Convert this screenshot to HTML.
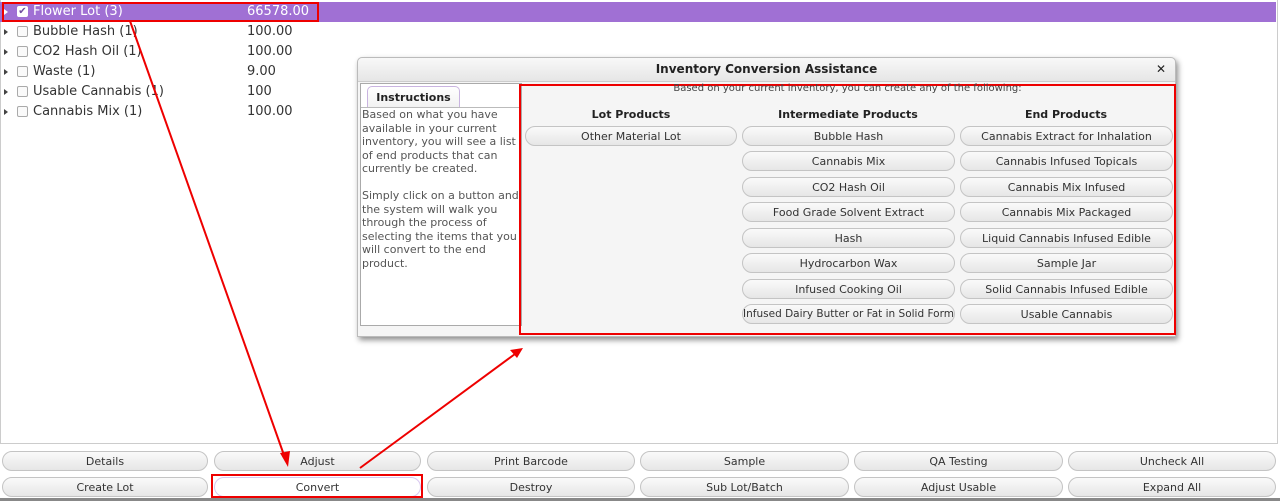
<!DOCTYPE html>
<html><head><meta charset="utf-8"><style>
*{margin:0;padding:0;box-sizing:border-box}
body{width:1280px;height:501px;background:#fff;font-family:"DejaVu Sans","Liberation Sans",sans-serif;position:relative;overflow:hidden;color:#333}
.a{position:absolute}
.row{position:absolute;left:0;width:1276px;height:20px;font-size:13px;line-height:20px}
.row .t{position:absolute;left:4px;top:7px;width:0;height:0;border-left:4px solid #444;border-top:3px solid transparent;border-bottom:3px solid transparent}
.row .cb{position:absolute;left:17px;top:4px;width:11px;height:11px;border:1px solid #aaa;border-radius:2px;background:#fafafa}
.row .n{position:absolute;left:33px}
.row .v{position:absolute;left:247px}
.btn{position:absolute;height:20px;border:1px solid #c4c4c4;border-radius:10px;background:linear-gradient(#fafafa,#e6e6e6);font-size:11px;line-height:19px;text-align:center;color:#333}
.hd{position:absolute;font-size:11px;font-weight:bold;color:#222;text-align:center;width:212px}
</style></head><body>
<div class="a" style="left:0;top:0;width:1278px;height:444px;border:1px solid #ccc;border-top:none"></div>
<div class="row" style="top:2px;background:#a070d4;color:#fff"><span class="t" style="border-left-color:#fff"></span><span class="cb" style="background:#fff;border-color:#fff;color:#7050a0;font-size:10px;line-height:9px;text-align:center">✔</span><span class="n">Flower Lot (3)</span><span class="v">66578.00</span></div>
<div class="row" style="top:22px"><span class="t"></span><span class="cb"></span><span class="n">Bubble Hash (1)</span><span class="v">100.00</span></div>
<div class="row" style="top:42px"><span class="t"></span><span class="cb"></span><span class="n">CO2 Hash Oil (1)</span><span class="v">100.00</span></div>
<div class="row" style="top:62px"><span class="t"></span><span class="cb"></span><span class="n">Waste (1)</span><span class="v">9.00</span></div>
<div class="row" style="top:82px"><span class="t"></span><span class="cb"></span><span class="n">Usable Cannabis (1)</span><span class="v">100</span></div>
<div class="row" style="top:102px"><span class="t"></span><span class="cb"></span><span class="n">Cannabis Mix (1)</span><span class="v">100.00</span></div>
<div class="a" style="left:2px;top:2px;width:317px;height:20px;border:2px solid #e00"></div>

<div class="a" style="left:357px;top:57px;width:819px;height:280px;background:#f5f5f5;border:1px solid #bbb;border-radius:5px 5px 0 0;box-shadow:2px 3px 6px rgba(0,0,0,.45)">
 <div class="a" style="left:0;top:0;width:817px;height:24px;background:linear-gradient(#f8f8f8,#e6e6e6);border-bottom:1px solid #ccc;border-radius:5px 5px 0 0;font-size:12px;font-weight:bold;text-align:center;line-height:23px;color:#222">Inventory Conversion Assistance<span style="position:absolute;right:9px;font-size:12px">✕</span></div>
 <div class="a" style="left:2px;top:25px;width:162px;height:243px;background:#fff;border:1px solid #aaa">
  <div class="a" style="left:6px;top:2px;width:93px;height:21px;border:1px solid #c9b4e0;border-bottom:none;border-radius:5px 5px 0 0;background:linear-gradient(#fff,#f2f2f2);font-size:11px;font-weight:bold;text-align:center;line-height:21px;color:#222">Instructions</div>
  <div class="a" style="left:0;top:23px;width:160px;height:1px;background:#bbb"></div>
  <div class="a" style="left:1px;top:24px;width:158px;font-size:11px;line-height:13.5px;color:#555">Based on what you have available in your current inventory, you will see a list of end products that can currently be created.<br><br>Simply click on a button and the system will walk you through the process of selecting the items that you will convert to the end product.</div>
 </div>
</div>
<div class="a" style="left:519px;top:84px;width:657px;height:251px;border:2px solid #e00"></div>
<div class="a" style="left:519px;top:83px;width:657px;text-align:center;font-size:10px;color:#444">Based on your current inventory, you can create any of the following:</div>
<div class="hd" style="left:525px;top:108px">Lot Products</div>
<div class="hd" style="left:742px;top:108px">Intermediate Products</div>
<div class="hd" style="left:960px;top:108px">End Products</div>
<div class="btn" style="left:525px;top:126px;width:212px">Other Material Lot</div>

<div class="btn" style="left:742px;top:126px;width:213px">Bubble Hash</div>
<div class="btn" style="left:742px;top:151px;width:213px">Cannabis Mix</div>
<div class="btn" style="left:742px;top:177px;width:213px">CO2 Hash Oil</div>
<div class="btn" style="left:742px;top:202px;width:213px">Food Grade Solvent Extract</div>
<div class="btn" style="left:742px;top:228px;width:213px">Hash</div>
<div class="btn" style="left:742px;top:253px;width:213px">Hydrocarbon Wax</div>
<div class="btn" style="left:742px;top:279px;width:213px">Infused Cooking Oil</div>
<div class="btn" style="left:742px;top:304px;width:213px;font-size:10.5px">Infused Dairy Butter or Fat in Solid Form</div>

<div class="btn" style="left:960px;top:126px;width:213px">Cannabis Extract for Inhalation</div>
<div class="btn" style="left:960px;top:151px;width:213px">Cannabis Infused Topicals</div>
<div class="btn" style="left:960px;top:177px;width:213px">Cannabis Mix Infused</div>
<div class="btn" style="left:960px;top:202px;width:213px">Cannabis Mix Packaged</div>
<div class="btn" style="left:960px;top:228px;width:213px">Liquid Cannabis Infused Edible</div>
<div class="btn" style="left:960px;top:253px;width:213px">Sample Jar</div>
<div class="btn" style="left:960px;top:279px;width:213px">Solid Cannabis Infused Edible</div>
<div class="btn" style="left:960px;top:304px;width:213px">Usable Cannabis</div>

<div class="btn" style="left:2px;top:451px;width:206px">Details</div>
<div class="btn" style="left:214px;top:451px;width:207px">Adjust</div>
<div class="btn" style="left:427px;top:451px;width:208px">Print Barcode</div>
<div class="btn" style="left:640px;top:451px;width:209px">Sample</div>
<div class="btn" style="left:854px;top:451px;width:209px">QA Testing</div>
<div class="btn" style="left:1068px;top:451px;width:208px">Uncheck All</div>
<div class="btn" style="left:2px;top:477px;width:206px">Create Lot</div>
<div class="btn" style="left:214px;top:477px;width:207px;background:#fff;border-color:#d8c8f0">Convert</div>
<div class="btn" style="left:427px;top:477px;width:208px">Destroy</div>
<div class="btn" style="left:640px;top:477px;width:209px">Sub Lot/Batch</div>
<div class="btn" style="left:854px;top:477px;width:209px">Adjust Usable</div>
<div class="btn" style="left:1068px;top:477px;width:208px">Expand All</div>
<div class="a" style="left:211px;top:474px;width:212px;height:24px;border:2px solid #e00"></div>
<div class="a" style="left:0;top:498px;width:1280px;height:3px;background:#888"></div>

<svg class="a" style="left:0;top:0" width="1280" height="501">
<line x1="130" y1="21" x2="285" y2="458" stroke="#e00" stroke-width="2"/>
<polygon points="288,467 280,453 290,451" fill="#e00"/>
<line x1="360" y1="468" x2="515" y2="354" stroke="#e00" stroke-width="2"/>
<polygon points="523,348 510,350 517,358" fill="#e00"/>
</svg>
</body></html>
